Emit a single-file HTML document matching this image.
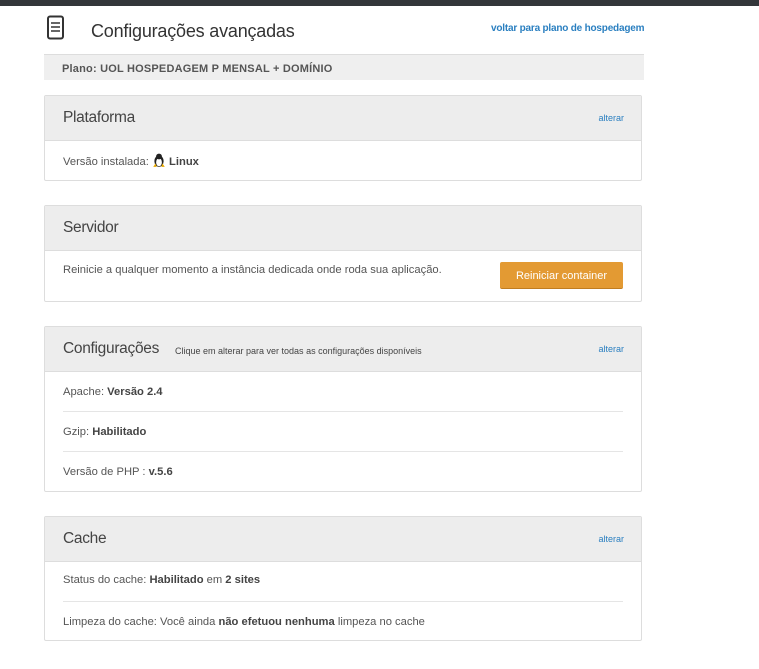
<!DOCTYPE html>
<html><head><meta charset="utf-8"><style>
*{margin:0;padding:0;box-sizing:border-box}
body{width:759px;height:669px;background:#fff;font-family:"Liberation Sans",sans-serif;color:#555;position:relative;overflow:hidden}
.a{position:absolute}
.top{left:0;top:0;width:759px;height:6px;background:#33363a}
.title{left:91px;top:21px;font-size:18px;color:#333;letter-spacing:-0.2px}
.back{left:491px;top:23px;font-size:10px;color:#2a7fc0;font-weight:bold;letter-spacing:-0.2px}
.plan{left:44px;top:54px;width:600px;height:26px;background:#efefef;border-top:1px solid #ddd;font-size:11px;font-weight:bold;color:#555;padding:8px 0 0 18px;letter-spacing:0.2px}
.panel{left:44px;width:598px;border:1px solid #ddd;border-radius:2px;background:#fff}
.hd{height:45px;background:#ededed;border-bottom:1px solid #ddd;position:relative}
.hd h2{position:absolute;left:18px;top:13px;font-size:15.5px;font-weight:normal;color:#444;letter-spacing:-0.3px}
.hd .alt{position:absolute;right:17px;top:17px;font-size:9px;color:#2a7fc0}
.hd .sub{position:absolute;left:130px;top:19px;font-size:9px;color:#444}
.row{margin:0 18px;height:40px;font-size:11.2px;color:#555;padding-top:14px;border-bottom:1px solid #e5e5e5;letter-spacing:0}
.row:last-child{border-bottom:none}
.row b{color:#444}
.btn{position:absolute;left:455px;top:56px;width:123px;height:27px;background:#e39a33;color:#fff;font-size:11px;text-align:center;line-height:29px;border-radius:2px;border-bottom:1px solid #c07d20}
</style></head><body>
<div class="a top"></div>
<svg class="a" style="left:46px;top:15px" width="20" height="26" viewBox="0 0 20 26"><rect x="2" y="1.5" width="15" height="22" rx="2" fill="none" stroke="#333" stroke-width="2"/><path d="M5 8h9M5 12h9M5 16h9" stroke="#333" stroke-width="1.5"/></svg>
<div class="a title">Configurações avançadas</div>
<div class="a back">voltar para plano de hospedagem</div>
<div class="a plan">Plano: UOL HOSPEDAGEM P MENSAL + DOMÍNIO</div>

<div class="a panel" style="top:95px;height:86px">
<div class="hd"><h2>Plataforma</h2><span class="alt">alterar</span></div>
<div class="row" style="padding-top:12px">Versão instalada: <svg width="14" height="15" viewBox="0 0 12 13" style="vertical-align:-3px"><ellipse cx="6" cy="7" rx="4" ry="5" fill="#222"/><ellipse cx="6" cy="8" rx="2.5" ry="3.5" fill="#fff"/><circle cx="6" cy="3" r="2.5" fill="#222"/><path d="M1 12l2-3 1 3zM11 12l-2-3-1 3z" fill="#e8a800"/></svg> <b>Linux</b></div>
</div>

<div class="a panel" style="top:205px;height:97px">
<div class="hd"><h2>Servidor</h2></div>
<div class="row" style="padding-top:13px;border:none">Reinicie a qualquer momento a instância dedicada onde roda sua aplicação.</div>
<div class="btn">Reiniciar container</div>
</div>

<div class="a panel" style="top:326px;height:166px">
<div class="hd"><h2>Configurações</h2><span class="sub">Clique em alterar para ver todas as configurações disponíveis</span><span class="alt">alterar</span></div>
<div class="row">Apache: <b>Versão 2.4</b></div>
<div class="row">Gzip: <b>Habilitado</b></div>
<div class="row">Versão de PHP : <b>v.5.6</b></div>
</div>

<div class="a panel" style="top:516px;height:125px">
<div class="hd"><h2>Cache</h2><span class="alt">alterar</span></div>
<div class="row" style="padding-top:12px">Status do cache: <b>Habilitado</b> em <b>2 sites</b></div>
<div class="row">Limpeza do cache: Você ainda <b>não efetuou nenhuma</b> limpeza no cache</div>
</div>
</body></html>
